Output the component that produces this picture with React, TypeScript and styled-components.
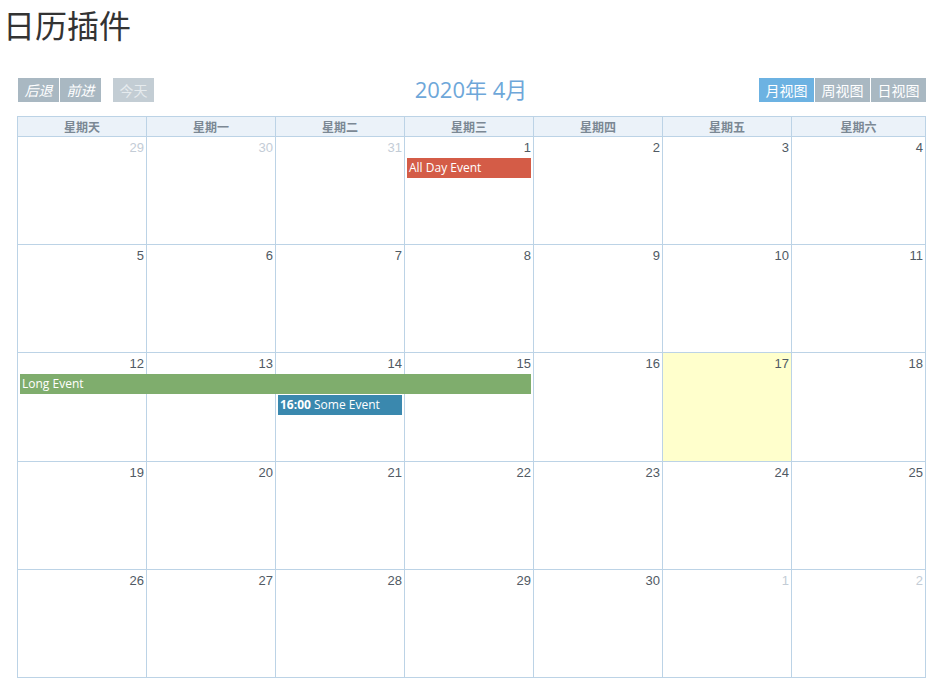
import React from 'react';
import styled, { createGlobalStyle } from 'styled-components';

const GlobalStyle = createGlobalStyle`
    body {
        margin: 0;
        background: #fff;
        font-family: "Open Sans", "Noto Sans CJK SC", sans-serif;
    }
`;

const Page = styled.div`
    width: 950px;
    padding: 4px 24px 0 17px;
    box-sizing: border-box;
`;

const Title = styled.h1`
    margin: 0 0 0 -14px;
    font-size: 32px;
    line-height: 40px;
    font-weight: 400;
    color: #333;
    font-family: "Noto Sans CJK SC", sans-serif;
`;

const Toolbar = styled.div`
    display: grid;
    grid-template-columns: 1fr auto 1fr;
    align-items: center;
    margin: 34px 0 14px 1px;
    height: 24px;
`;

const ButtonGroup = styled.div<{ $right?: boolean }>`
    display: flex;
    gap: 12px;
    justify-self: ${p => (p.$right ? 'end' : 'start')};
`;

const Segment = styled.div`
    display: flex;
    gap: 1px;
`;

const Button = styled.button<{ $active?: boolean; $disabled?: boolean; $italic?: boolean }>`
    display: block;
    height: 24px;
    padding: 0 6.5px;
    border: none;
    border-radius: 0;
    font-family: "Noto Sans CJK SC", sans-serif;
    font-size: 14px;
    line-height: 24px;
    font-style: ${p => (p.$italic ? 'italic' : 'normal')};
    color: ${p => (p.$disabled ? '#e6ebee' : '#fff')};
    background: ${p => (p.$active ? '#6cb2e2' : p.$disabled ? '#c3cdd4' : '#a9b8c2')};
    cursor: pointer;
`;

const MonthTitle = styled.h2`
    margin: 0;
    font-size: 22px;
    line-height: 24px;
    font-weight: 400;
    color: #6ea7d9;
    font-family: "Open Sans", "Noto Sans CJK SC", sans-serif;
    transform: translate(-1px, -1px);
`;

const Calendar = styled.div`
    border-left: 1px solid #bcd3e6;
    border-top: 1px solid #bcd3e6;
`;

const columns = 'repeat(6, 129px) 1fr';

const HeadRow = styled.div`
    display: grid;
    grid-template-columns: ${columns};
    background: #ebf2f9;
`;

const HeadCell = styled.div`
    height: 19px;
    line-height: 19px;
    text-align: center;
    font-family: "Noto Sans CJK SC", sans-serif;
    font-size: 12px;
    font-weight: 700;
    color: #7b8894;
    border-right: 1px solid #bcd3e6;
    border-bottom: 1px solid #bcd3e6;
`;

const Week = styled.div`
    display: grid;
    grid-template-columns: ${columns};
    grid-template-rows: 21px 21px 21px 1fr;
    height: 108.2px;
`;

const DayCell = styled.div<{ $col: number; $today?: boolean }>`
    grid-column: ${p => p.$col};
    grid-row: 1 / -1;
    border-right: 1px solid #bcd3e6;
    border-bottom: 1px solid #bcd3e6;
    background: ${p => (p.$today ? '#ffffcc' : 'transparent')};
`;

const DayNum = styled.div<{ $col: number; $other?: boolean }>`
    grid-column: ${p => p.$col};
    grid-row: 1;
    z-index: 1;
    text-align: right;
    padding: 3px 3px 0 0;
    font-family: "Liberation Sans", Arial, sans-serif;
    font-size: 13px;
    line-height: 15px;
    color: ${p => (p.$other ? '#c3ccd6' : '#505a64')};
`;

const Event = styled.div<{ $color: string }>`
    z-index: 2;
    margin: 0 3px 1px 2px;
    padding: 0 2px;
    background: ${p => p.$color};
    color: #fff;
    font-size: 12px;
    line-height: 20px;
    height: 20px;
    white-space: nowrap;
    overflow: hidden;
    b {
        font-weight: 700;
    }
`;

const heads = ['星期天', '星期一', '星期二', '星期三', '星期四', '星期五', '星期六'];

type Day = { n: number; other?: boolean; today?: boolean };
type Ev = { from: number; to: number; row: number; title: string; time?: string; color: string };

const weeks: { days: Day[]; events: Ev[] }[] = [
    {
        days: [{ n: 29, other: true }, { n: 30, other: true }, { n: 31, other: true }, { n: 1 }, { n: 2 }, { n: 3 }, { n: 4 }],
        events: [{ from: 4, to: 5, row: 2, title: 'All Day Event', color: '#d45c47' }],
    },
    { days: [5, 6, 7, 8, 9, 10, 11].map(n => ({ n })), events: [] },
    {
        days: [12, 13, 14, 15, 16, 17, 18].map(n => ({ n, today: n === 17 })),
        events: [
            { from: 1, to: 5, row: 2, title: 'Long Event', color: '#7fad6d' },
            { from: 3, to: 4, row: 3, title: 'Some Event', time: '16:00', color: '#3a88ae' },
        ],
    },
    { days: [19, 20, 21, 22, 23, 24, 25].map(n => ({ n })), events: [] },
    {
        days: [{ n: 26 }, { n: 27 }, { n: 28 }, { n: 29 }, { n: 30 }, { n: 1, other: true }, { n: 2, other: true }],
        events: [],
    },
];

const App: React.FC = () => {
    return (
        <Page>
            <GlobalStyle />
            <Title>日历插件</Title>
            <Toolbar>
                <ButtonGroup>
                    <Segment>
                        <Button $italic>后退</Button>
                        <Button $italic>前进</Button>
                    </Segment>
                    <Button $disabled>今天</Button>
                </ButtonGroup>
                <MonthTitle>2020年 4月</MonthTitle>
                <ButtonGroup $right>
                    <Segment>
                        <Button $active>月视图</Button>
                        <Button>周视图</Button>
                        <Button>日视图</Button>
                    </Segment>
                </ButtonGroup>
            </Toolbar>
            <Calendar>
                <HeadRow>
                    {heads.map(h => <HeadCell key={h}>{h}</HeadCell>)}
                </HeadRow>
                {weeks.map((w, wi) => (
                    <Week key={wi}>
                        {w.days.map((d, i) => (
                            <DayCell key={'c' + i} $col={i + 1} $today={d.today} />
                        ))}
                        {w.days.map((d, i) => (
                            <DayNum key={'n' + i} $col={i + 1} $other={d.other}>{d.n}</DayNum>
                        ))}
                        {w.events.map(e => (
                            <Event
                                key={e.title}
                                $color={e.color}
                                style={{ gridColumn: `${e.from} / ${e.to}`, gridRow: e.row }}
                            >
                                {e.time && <b>{e.time} </b>}{e.title}
                            </Event>
                        ))}
                    </Week>
                ))}
            </Calendar>
        </Page>
    );
};

export default App;
